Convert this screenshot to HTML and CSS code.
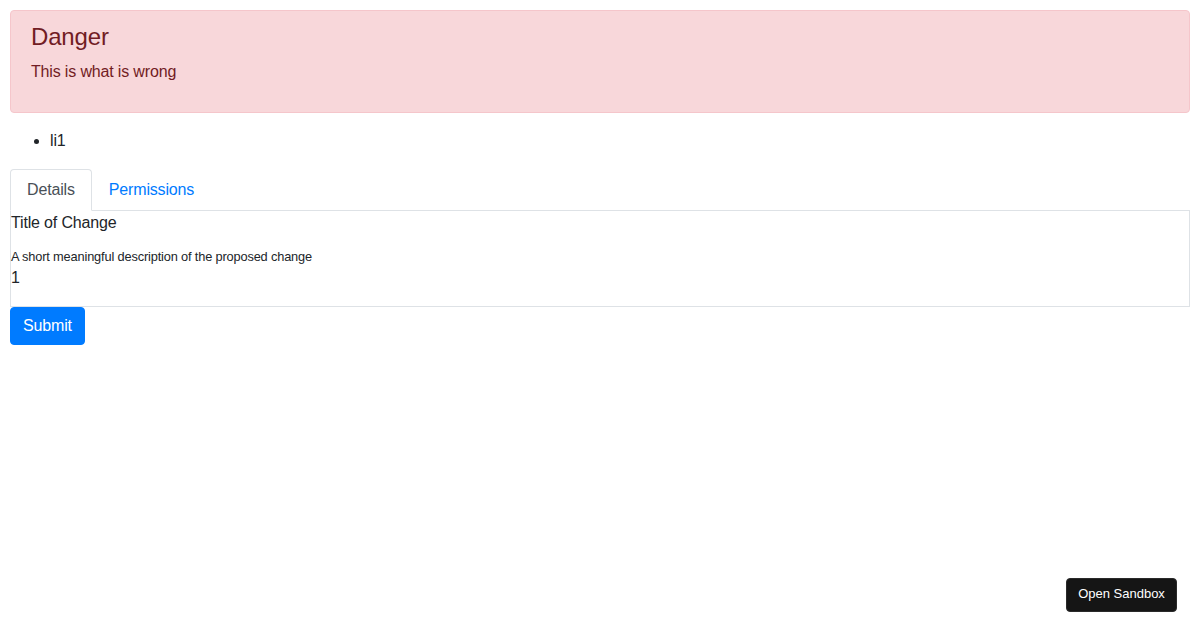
FILE: index.html
```html
<!DOCTYPE html>
<html>
<head>
<meta charset="utf-8">
<link rel="stylesheet" href="styles.css">
</head>
<body>
<div class="alert">
  <h4 class="alert-heading">Danger</h4>
  <p class="alert-text">This is what is wrong</p>
</div>
<ul class="list">
  <li>li1</li>
</ul>
<ul class="tabs">
  <li><a class="tab active">Details</a></li>
  <li><a class="tab">Permissions</a></li>
</ul>
<div class="tab-pane">
  <div class="title">Title of Change</div>
  <div class="desc">A short meaningful description of the proposed change</div>
  <div class="num">1</div>
</div>
<button class="btn-submit">Submit</button>
<button class="sandbox">Open Sandbox</button>
</body>
</html>
```
FILE: styles.css
```css
* { box-sizing: border-box; }
body {
  margin: 10px;
  font-family: "Liberation Sans", Arial, sans-serif;
  font-size: 16px;
  line-height: 1.5;
  letter-spacing: -0.01em;
  color: #212529;
  background: #fff;
}
.alert {
  background: #f8d7da;
  border: 1px solid #f5c6cb;
  color: #721c24;
  border-radius: 4px;
  padding: 12px 20px;
  margin-bottom: 16px;
}
.alert-heading {
  margin: 0 0 8px;
  font-size: 24px;
  font-weight: 500;
  line-height: 1.2;
}
.alert-text {
  margin: 0 0 16px;
}
.list {
  margin: 0 0 16px;
  padding-left: 40px;
}
.tabs {
  list-style: none;
  margin: 0;
  padding: 0;
  display: flex;
  border-bottom: 1px solid #dee2e6;
}
.tabs li { margin-bottom: -1px; }
.tab {
  display: block;
  padding: 8px 16px;
  border: 1px solid transparent;
  border-top-left-radius: 4px;
  border-top-right-radius: 4px;
  color: #007bff;
  text-decoration: none;
}
.tab.active {
  color: #495057;
  background: #fff;
  border-color: #dee2e6 #dee2e6 #fff;
}
.tab-pane {
  border: 1px solid #dee2e6;
  border-top: none;
  padding-bottom: 16px;
}
.title { margin-bottom: 12px; }
.desc { font-size: 12.8px; line-height: 19.2px; }
.num { line-height: 24px; }
.btn-submit {
  display: block;
  font-family: inherit;
  letter-spacing: inherit;
  font-size: 16px;
  line-height: 24px;
  padding: 6px 12px;
  border: 1px solid #007bff;
  background: #007bff;
  color: #fff;
  border-radius: 4px;
}
.sandbox {
  position: fixed;
  right: 23px;
  bottom: 18px;
  width: 111px;
  height: 34px;
  background: #151515;
  color: #fff;
  border: 1px solid #2a2a2a;
  border-radius: 4px;
  font-family: "Liberation Sans", Arial, sans-serif;
  font-size: 13px;
  line-height: 16px;
  padding: 0 0 2px;
}
```
